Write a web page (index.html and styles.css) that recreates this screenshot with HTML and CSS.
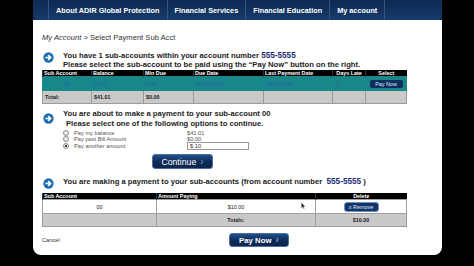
FILE: index.html
```html
<!DOCTYPE html>
<html lang="en">

<head>
    <meta charset="UTF-8">
    <meta name="viewport" content="width=device-width, initial-scale=1.0">
    <title>Select Payment Sub Acct</title>
    <link rel="stylesheet" href="styles.css">
</head>

<body>
    <div class="page">
        <div class="top-nav">
            <div class="nav-item">About ADIR Global Protection</div>
            <div class="nav-item">Financial Services</div>
            <div class="nav-item">Financial Education</div>
            <div class="nav-item">My account</div>
        </div>

        <div class="panel">
            <div class="crumb"><i>My Account</i> &gt; Select Payment Sub Acct</div>

            <div class="msg msg-first">
                <svg class="arrow-icon" viewBox="0 0 12 12">
                    <circle cx="6" cy="6" r="5.6" fill="#1e6db3" />
                    <path d="M2.6 6h5.2M5.6 3.4L8.4 6 5.6 8.6" stroke="#fff" stroke-width="1.7" fill="none" />
                </svg>
                <div class="msg-text">
                    <div>You have 1 sub-accounts within your account number <span class="acct">555-5555</span></div>
                    <div>Please select the sub-account to be paid using the “Pay Now” button on the right.</div>
                </div>
            </div>

            <table class="grid grid-accounts">
                <colgroup>
                    <col style="width: 49px">
                    <col style="width: 52px">
                    <col style="width: 50px">
                    <col style="width: 70px">
                    <col style="width: 69px">
                    <col style="width: 33px">
                    <col style="width: 41px">
                </colgroup>
                <tr class="head">
                    <th>Sub Account</th>
                    <th>Balance</th>
                    <th>Min Due</th>
                    <th>Due Date</th>
                    <th>Last Payment Date</th>
                    <th class="center">Days Late</th>
                    <th class="center">Select</th>
                </tr>
                <tr class="teal-row">
                    <td class="center">00</td>
                    <td>41.01</td>
                    <td>0.00</td>
                    <td>01/25/2012</td>
                    <td>09/03/2011</td>
                    <td>0</td>
                    <td class="center"><span class="mini-button">Pay Now</span></td>
                </tr>
                <tr class="total-row">
                    <td>Total:</td>
                    <td>$41.01</td>
                    <td>$0.00</td>
                    <td></td>
                    <td></td>
                    <td></td>
                    <td></td>
                </tr>
            </table>

            <div class="msg msg-second">
                <svg class="arrow-icon" viewBox="0 0 12 12">
                    <circle cx="6" cy="6" r="5.6" fill="#1e6db3" />
                    <path d="M2.6 6h5.2M5.6 3.4L8.4 6 5.6 8.6" stroke="#fff" stroke-width="1.7" fill="none" />
                </svg>
                <div class="msg-text">
                    <div>You are about to make a payment to your sub-account 00</div>
                    <div class="indent">Please select one of the following options to continue.</div>
                </div>
            </div>

            <div class="options">
                <label class="option"><span class="radio"></span><span class="option-label">Pay my balance</span><span>$41.01</span></label>
                <label class="option"><span class="radio"></span><span class="option-label">Pay past Bill Amount</span><span>$0.00</span></label>
                <label class="option"><span class="radio checked"></span><span class="option-label">Pay another amount</span><span class="amount-box">$ 10</span></label>
            </div>

            <div class="continue-row">
                <span class="big-button continue-button">Continue <span class="chevron">›</span></span>
            </div>

            <div class="msg msg-third">
                <svg class="arrow-icon" viewBox="0 0 12 12">
                    <circle cx="6" cy="6" r="5.6" fill="#1e6db3" />
                    <path d="M2.6 6h5.2M5.6 3.4L8.4 6 5.6 8.6" stroke="#fff" stroke-width="1.7" fill="none" />
                </svg>
                <div class="msg-text">
                    <div>You are making a payment to your sub-accounts (from account number &nbsp;<span class="acct">555-5555</span> )</div>
                </div>
            </div>

            <table class="grid grid-payments">
                <colgroup>
                    <col style="width: 114px">
                    <col style="width: 159px">
                    <col style="width: 91px">
                </colgroup>
                <tr class="head">
                    <th>Sub Account</th>
                    <th>Amount Paying</th>
                    <th class="center">Delete</th>
                </tr>
                <tr class="white-row">
                    <td class="center">00</td>
                    <td class="center">$10.00</td>
                    <td class="center"><span class="remove-button">x Remove</span></td>
                </tr>
                <tr class="total-row">
                    <td></td>
                    <td class="center">Totals:</td>
                    <td class="center">$10.00</td>
                </tr>
            </table>

            <div class="footer-row">
                <span class="cancel">Cancel</span>
                <span class="big-button pay-button">Pay Now <span class="chevron">›</span></span>
            </div>

            <svg class="cursor" viewBox="0 0 8 12">
                <path d="M0.5 0.5v9l2.2-2 1.6 3.4 1.3-.6-1.6-3.3h3z" fill="#111" stroke="#fff" stroke-width="0.6" />
            </svg>
        </div>
    </div>
</body>

</html>
```

FILE: styles.css
```css
body {
    margin: 0;
    width: 474px;
    height: 266px;
    overflow: hidden;
    background-color: #000;
    font-family: "Liberation Sans", Arial, sans-serif;
    color: #222;
}

.page {
    width: 409px;
    margin-left: 33px;
}

.top-nav {
    display: flex;
    height: 20px;
    padding-left: 15px;
    background: linear-gradient(#0c2a52, #173b6b);
    border-radius: 0 0 3px 3px;
}

.nav-item {
    display: flex;
    align-items: center;
    padding: 0 7px;
    border-left: 1px solid #34547f;
    color: #fff;
    font-size: 7.3px;
    font-weight: bold;
    white-space: nowrap;
}

.nav-item:last-child {
    border-right: 1px solid #34547f;
}

.panel {
    position: relative;
    height: 235px;
    padding: 13px 0 0 9px;
    box-sizing: border-box;
    background-color: #fff;
    border-radius: 0 0 8px 8px;
}

.crumb {
    height: 10px;
    line-height: 10px;
    font-size: 7.6px;
    color: #333;
}

.crumb i {
    font-style: italic;
}

.msg {
    display: flex;
    align-items: flex-start;
}

.msg-text {
    font-size: 7.65px;
    font-weight: bold;
    line-height: 9px;
    white-space: nowrap;
}

.arrow-icon {
    width: 11px;
    height: 11px;
    margin: 1px 9px 0 1px;
    flex-shrink: 0;
}

.msg-first {
    margin-top: 8px;
}

.msg-second {
    margin-top: 5px;
}

.msg-second .msg-text {
    line-height: 10px;
}

.msg-second .arrow-icon {
    margin-top: 4px;
}

.msg-third {
    margin-top: 8px;
}

.msg-third .msg-text {
    line-height: 10px;
}

.indent {
    padding-left: 3px;
}

.acct {
    color: #1c2f78;
    font-weight: bold;
    font-size: 8.2px;
}

.grid {
    border-collapse: collapse;
    table-layout: fixed;
    font-size: 5.4px;
    margin-top: 1px;
}

.grid-payments {
    margin-top: 4px;
}

.grid th {
    height: 6px;
    padding: 0 1px;
    background-color: #000;
    color: #fff;
    font-weight: bold;
    text-align: left;
    line-height: 6px;
    white-space: nowrap;
    border-left: 1px solid #333;
}

.grid td {
    padding: 0 2px;
    border: 1px solid #a0a0a0;
    white-space: nowrap;
}

.grid .center {
    text-align: center;
}

.teal-row td {
    height: 13px;
    background-color: #17878a;
    border-color: #17878a;
    color: #2a60ad;
}

.total-row td {
    height: 12px;
    background-color: #c9c9c9;
    border-color: #9c9c9c;
    color: #222;
    font-weight: bold;
}

.white-row td {
    height: 13px;
    background-color: #fff;
    color: #222;
}

.mini-button {
    display: inline-block;
    width: 33px;
    height: 8px;
    line-height: 8px;
    border-radius: 2px;
    background-color: #0f2f5f;
    color: #dbe6f5;
    font-size: 5.4px;
}

.remove-button {
    display: inline-block;
    width: 33px;
    height: 8px;
    line-height: 8px;
    border-radius: 3px;
    background-color: #12356a;
    border: 1px solid #6d8fbf;
    color: #e6eef9;
    font-size: 5.4px;
}

.options {
    margin: 1px 0 0 21px;
    font-size: 5.7px;
    color: #555;
}

.option {
    display: flex;
    align-items: center;
    height: 6px;
}

.option:last-child {
    height: 7px;
}

.radio {
    width: 4px;
    height: 4px;
    margin-right: 5px;
    border: 0.5px solid #888;
    border-radius: 50%;
    background-color: #f4f4f4;
    box-sizing: content-box;
}

.radio.checked {
    background: radial-gradient(#333 45%, #eee 55%);
}

.option-label {
    width: 113px;
}

.amount-box {
    width: 58px;
    height: 6px;
    line-height: 6px;
    padding-left: 2px;
    border: 1px solid #999;
    color: #333;
}

.continue-row {
    display: flex;
    padding-left: 110px;
    margin-top: 5px;
}

.big-button {
    display: flex;
    align-items: center;
    justify-content: center;
    gap: 4px;
    border-radius: 3px;
    background: linear-gradient(#234f8a, #0c2a55 55%, #0b2650);
    border: 1px solid #4d6f9d;
    color: #fff;
    box-sizing: border-box;
}

.continue-button {
    width: 61px;
    height: 15px;
    font-size: 8.7px;
}

.chevron {
    color: #7aa0d0;
    font-size: 10px;
    line-height: 10px;
}

.footer-row {
    display: flex;
    align-items: center;
    margin-top: 6px;
}

.cancel {
    width: 187px;
    font-size: 5.7px;
    color: #333;
}

.pay-button {
    width: 60px;
    height: 14px;
    font-size: 7.8px;
    font-weight: bold;
}

.cursor {
    position: absolute;
    left: 268px;
    top: 182px;
    width: 5px;
    height: 8px;
}
```
